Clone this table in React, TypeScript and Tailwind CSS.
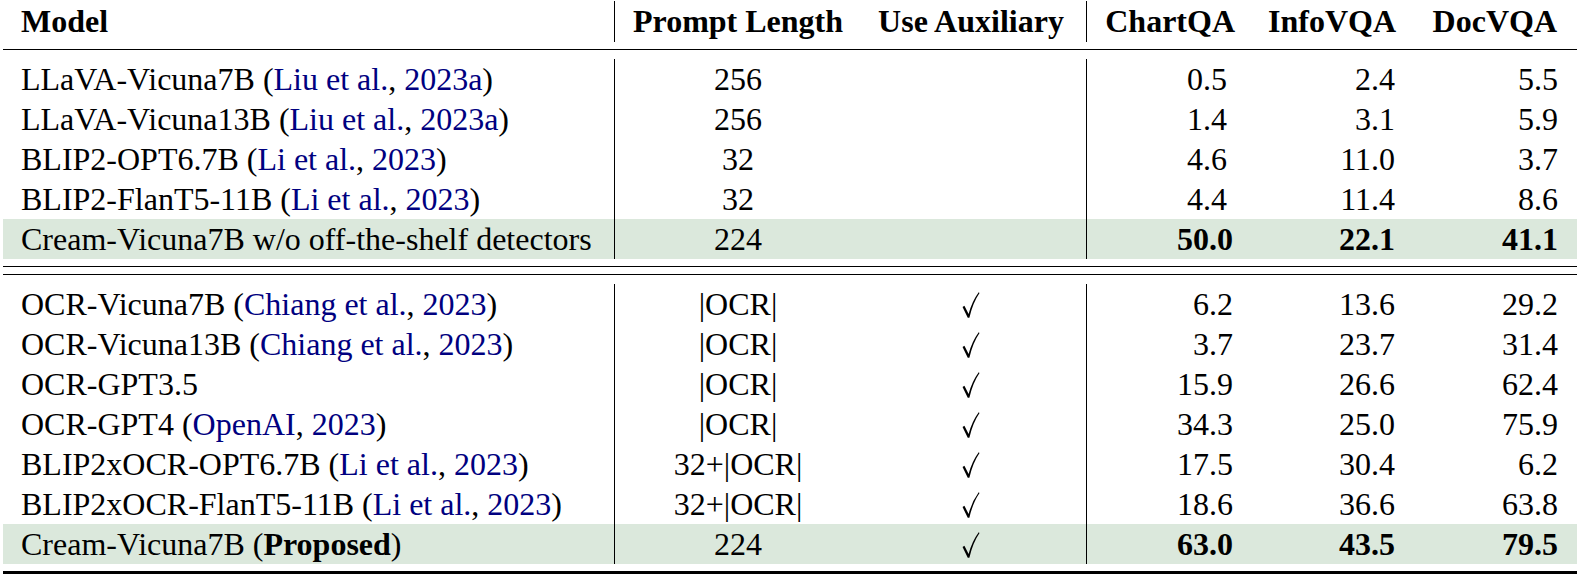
import React from "react";

interface Row {
  model: string;
  cite?: [string, string];
  proposed?: boolean;
  prompt: string;
  aux: boolean;
  chart: string;
  info: string;
  doc: string;
  highlight?: boolean;
  narrow?: boolean;
}

const first: Row[] = [
  { model: "LLaVA-Vicuna7B", cite: ["Liu et al.", "2023a"], prompt: "256", aux: false, chart: "0.5", info: "2.4", doc: "5.5", narrow: true },
  { model: "LLaVA-Vicuna13B", cite: ["Liu et al.", "2023a"], prompt: "256", aux: false, chart: "1.4", info: "3.1", doc: "5.9", narrow: true },
  { model: "BLIP2-OPT6.7B", cite: ["Li et al.", "2023"], prompt: "32", aux: false, chart: "4.6", info: "11.0", doc: "3.7", narrow: true },
  { model: "BLIP2-FlanT5-11B", cite: ["Li et al.", "2023"], prompt: "32", aux: false, chart: "4.4", info: "11.4", doc: "8.6", narrow: true },
  { model: "Cream-Vicuna7B w/o off-the-shelf detectors", prompt: "224", aux: false, chart: "50.0", info: "22.1", doc: "41.1", highlight: true },
];

const second: Row[] = [
  { model: "OCR-Vicuna7B", cite: ["Chiang et al.", "2023"], prompt: "|OCR|", aux: true, chart: "6.2", info: "13.6", doc: "29.2" },
  { model: "OCR-Vicuna13B", cite: ["Chiang et al.", "2023"], prompt: "|OCR|", aux: true, chart: "3.7", info: "23.7", doc: "31.4" },
  { model: "OCR-GPT3.5", prompt: "|OCR|", aux: true, chart: "15.9", info: "26.6", doc: "62.4" },
  { model: "OCR-GPT4", cite: ["OpenAI", "2023"], prompt: "|OCR|", aux: true, chart: "34.3", info: "25.0", doc: "75.9" },
  { model: "BLIP2xOCR-OPT6.7B", cite: ["Li et al.", "2023"], prompt: "32+|OCR|", aux: true, chart: "17.5", info: "30.4", doc: "6.2" },
  { model: "BLIP2xOCR-FlanT5-11B", cite: ["Li et al.", "2023"], prompt: "32+|OCR|", aux: true, chart: "18.6", info: "36.6", doc: "63.8" },
  { model: "Cream-Vicuna7B", proposed: true, prompt: "224", aux: true, chart: "63.0", info: "43.5", doc: "79.5", highlight: true },
];

const cols = "grid grid-cols-[612px_246px_226px_166px_162px_162px]";

// \checkmark: thick short stroke, thin long curved stroke
function Check() {
  return (
    <svg width="18" height="26" viewBox="0 0 16 24" className="inline-block align-[-3px]">
      <path d="M0.2 13.9 L1.9 12.8 L5.8 20.2 Q8.9 8.6 15.1 0.2 L15.9 0.9 Q9.8 9.6 6.5 23.7 L5.0 23.7 Z" fill="black" />
    </svg>
  );
}

function TableRow({ row }: { row: Row }) {
  const num = row.highlight ? "font-bold" : "";
  return (
    <div className={`${cols} h-[40px] leading-[40px] ${row.highlight ? "bg-[#dbe8dc]" : ""}`}>
      <div className="border-r border-black pl-[18px] whitespace-nowrap">
        {row.model}
        {row.cite && (
          <>
            {" ("}
            <span className="text-[#000080]">{row.cite[0]}</span>
            {", "}
            <span className="text-[#000080]">{row.cite[1]}</span>
            {")"}
          </>
        )}
        {row.proposed && (
          <>
            {" ("}
            <span className="font-bold">Proposed</span>
            {")"}
          </>
        )}
      </div>
      <div className="text-center whitespace-nowrap">{row.prompt}</div>
      <div className="border-r border-black text-center pr-[6px]">{row.aux && <Check />}</div>
      <div className={`text-right ${row.narrow ? "pr-[26px]" : "pr-[20px]"} ${num}`}>{row.chart}</div>
      <div className={`text-right pr-[20px] ${num}`}>{row.info}</div>
      <div className={`text-right pr-[19px] ${num}`}>{row.doc}</div>
    </div>
  );
}

export default function App() {
  return (
    <div className="w-[1581px] h-[575px] bg-white overflow-hidden text-black text-[32px] font-['Liberation_Serif',serif]">
      <div className="ml-[3px] w-[1574px] pt-[1px]">
        <div className={`${cols} h-[41px] leading-[40px] font-bold`}>
          <div className="border-r border-black pl-[18px]">Model</div>
          <div className="text-center">Prompt Length</div>
          <div className="border-r border-black text-center pr-[5px] whitespace-nowrap">Use Auxiliary</div>
          <div className="text-right pr-[18px]">ChartQA</div>
          <div className="text-right pr-[19px]">InfoVQA</div>
          <div className="text-right pr-[20px]">DocVQA</div>
        </div>

        <div className="mt-[7px] h-px bg-black" />

        <div className="mt-[9px]">
          {first.map((r) => (
            <TableRow key={r.model} row={r} />
          ))}
        </div>

        <div className="mt-[7px] h-px bg-black" />
        <div className="mt-[7px] h-px bg-black" />

        <div className="mt-[9px]">
          {second.map((r) => (
            <TableRow key={r.model} row={r} />
          ))}
        </div>

        <div className="mt-[7px] h-[3px] bg-black" />
      </div>
    </div>
  );
}
